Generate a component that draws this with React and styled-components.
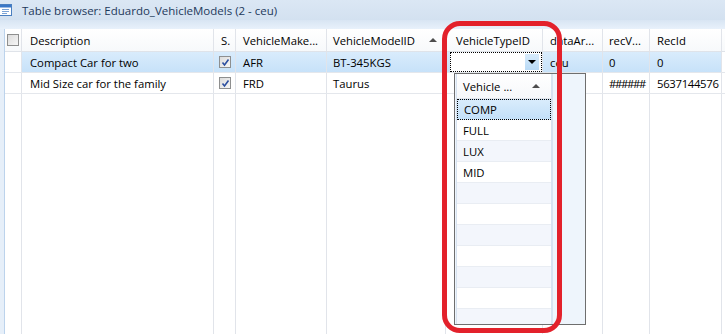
import React from "react";
import styled, { createGlobalStyle } from "styled-components";

const Global = createGlobalStyle`
  html, body { margin: 0; padding: 0; background: #e6eff9; }
  body { font-family: "Open Sans", "Liberation Sans", sans-serif; }
`;

const COLS = "17px 192px 22px 91px 119px 97px 60px 47px 72px 1fr";

const Window = styled.div`
  position: relative;
  width: 725px;
  height: 334px;
  overflow: hidden;
  background: #e6eff9;
  display: flex;
  flex-direction: column;
  font-size: 11.3px;
  color: #000;
`;

const TitleBar = styled.div`
  height: 20px;
  display: flex;
  align-items: center;
  gap: 10px;
  background: linear-gradient(#dbe7f4, #d3e1f0);
  color: #1e395b;
  font-size: 11.5px;
  flex: none;
`;

const TitleText = styled.span`
  letter-spacing: 0;
`;

const Band = styled.div`
  height: 9px;
  flex: none;
  background: linear-gradient(#d8e5f3, #e8f1fb);
`;

const Body = styled.div`
  flex: 1;
  display: flex;
  min-height: 0;
`;

const Edge = styled.div`
  width: 4px;
  flex: none;
  background: #e6eff9;
  border-right: 1px solid #bcd3ec;
`;

const Grid = styled.div`
  flex: 1;
  display: flex;
  flex-direction: column;
  background: #fff;
`;

const Row = styled.div`
  display: grid;
  grid-template-columns: ${COLS};
  height: ${(p) => p.$h}px;
  flex: ${(p) => (p.$fill ? 1 : "none")};
  box-sizing: border-box;
  border-bottom: ${(p) => (p.$fill ? "none" : `1px solid ${p.$line || "#e4e7ec"}`)};
  background: ${(p) => (p.$head ? "linear-gradient(#ffffff, #f7f9fb)" : "#fff")};
`;

const Cell = styled.div`
  display: flex;
  align-items: center;
  padding-left: ${(p) => p.$pl ?? 7}px;
  border-right: ${(p) => (p.$last ? "none" : "1px solid #e1e4ea")};
  white-space: nowrap;
  overflow: hidden;
  position: relative;
  letter-spacing: ${(p) => p.$ls ?? 0}px;
  background: ${(p) =>
    p.$sel ? "linear-gradient(#d9ecfc, #c7e2f9)" : "transparent"};
  color: #000;
`;

const HeadCell = styled(Cell)`
  justify-content: space-between;
  padding-right: 8px;
`;

const SortUp = styled.span`
  width: 0;
  height: 0;
  border-left: 4px solid transparent;
  border-right: 4px solid transparent;
  border-bottom: 4px solid #4d4d4d;
`;

const Box = styled.span`
  width: 12px;
  height: 12px;
  box-sizing: border-box;
  border: 1px solid #8e8f8f;
  background: linear-gradient(135deg, #dcdcdc, #f6f6f6);
  display: inline-flex;
  align-items: center;
  justify-content: center;
`;

const Editor = styled.div`
  position: absolute;
  left: 4px;
  top: 0;
  right: 0;
  bottom: 0;
  background: #fff;
  border: 1px dotted #000;
  box-sizing: border-box;
  display: flex;
  justify-content: flex-end;
  align-items: stretch;
`;

const DropBtn = styled.div`
  width: 14px;
  margin: 1px 2px 1px 0;
  background: linear-gradient(#d7ebfb, #b9daf6);
  display: flex;
  align-items: center;
  justify-content: center;
`;

const DownTri = styled.span`
  width: 0;
  height: 0;
  border-left: 4px solid transparent;
  border-right: 4px solid transparent;
  border-top: 4px solid #000;
`;

const Popup = styled.div`
  position: absolute;
  left: 454px;
  top: 73px;
  width: 132px;
  height: 252px;
  box-sizing: border-box;
  border: 1px solid #6e6e6e;
  background: #eef5fc;
  display: flex;
  z-index: 2;
`;

const List = styled.div`
  width: 94px;
  margin-left: 1px;
  border-left: 1px solid #d6e2f0;
  border-right: 2px solid #d7e3f1;
  background: #fff;
  display: flex;
  flex-direction: column;
  overflow: hidden;
`;

const ListHead = styled.div`
  height: 24px;
  flex: none;
  display: flex;
  align-items: center;
  justify-content: space-between;
  padding: 0 11px 0 6px;
  border-bottom: 1px solid #e2e6ec;
  background: linear-gradient(#ffffff, #f6f8fa);
`;

const Item = styled.div`
  height: 21px;
  flex: none;
  box-sizing: border-box;
  display: flex;
  align-items: center;
  padding-left: 6px;
  border: ${(p) => (p.$sel ? "1px dotted #000" : "none")};
  border-bottom: ${(p) => (p.$sel ? "1px dotted #000" : "1px solid #e9edf3")};
  background: ${(p) =>
    p.$sel
      ? "linear-gradient(#d9ecfc, #c3e0f8)"
      : p.$alt
      ? "#f3f6fc"
      : "#fff"};
`;

const Ring = styled.div`
  position: absolute;
  left: 442px;
  top: 21px;
  width: 120px;
  height: 312px;
  box-sizing: border-box;
  border: 5px solid #e3212b;
  border-radius: 18px;
  z-index: 3;
  pointer-events: none;
`;

const Check = ({ on }) => (
  <Box>
    {on && (
      <svg width="9" height="9" viewBox="0 0 9 9">
        <path d="M1.5 4.5 L3.5 7 L7.5 1.5" fill="none" stroke="#2c4fa0" strokeWidth="1.6" />
      </svg>
    )}
  </Box>
);

const WinIcon = () => (
  <svg width="13" height="12" viewBox="0 0 13 12" style={{ marginLeft: -1 }}>
    <rect x="0.5" y="0.5" width="12" height="11" fill="#fff" stroke="#4a7fc0" />
    <rect x="1" y="1" width="11" height="2.5" fill="#3a78c8" />
    <rect x="3" y="5" width="7" height="1" fill="#7aa3d6" />
    <rect x="3" y="7" width="7" height="1" fill="#7aa3d6" />
    <rect x="3" y="9" width="5" height="1" fill="#7aa3d6" />
  </svg>
);

const headers = [
  { t: "Description", pl: 8 },
  { t: "S.", pl: 7 },
  { t: "VehicleMake...", pl: 7 },
  { t: "VehicleModelID", pl: 6, sort: true },
  { t: "VehicleTypeID", pl: 10 },
  { t: "dataAr...", pl: 7 },
  { t: "recV...", pl: 6 },
  { t: "RecId", pl: 7 },
];

const rows = [
  { d: "Compact Car for two", s: true, mk: "AFR", md: "BT-345KGS", da: "ceu", rv: "0", id: "0", sel: true },
  { d: "Mid Size car for the family", s: true, mk: "FRD", md: "Taurus", da: "", rv: "######", id: "5637144576" },
];

const items = ["COMP", "FULL", "LUX", "MID", "", "", "", "", "", "", "", ""];

export default function App() {
  return (
    <Window>
      <Global />
      <TitleBar>
        <WinIcon />
        <TitleText>Table browser: Eduardo_VehicleModels (2 - ceu)</TitleText>
      </TitleBar>
      <Band />
      <Body>
        <Edge />
        <Grid>
          <Row $h={23} $head $line="#dfe3e9">
            <Cell $pl={2}>
              <Box />
            </Cell>
            {headers.map((h) => (
              <HeadCell key={h.t} $pl={h.pl}>
                <span>{h.t}</span>
                {h.sort && <SortUp />}
              </HeadCell>
            ))}
            <Cell $last />
          </Row>
          {rows.map((r, i) => (
            <Row key={i} $h={21}>
              <Cell />
              <Cell $sel={r.sel} $pl={8}>{r.d}</Cell>
              <Cell $sel={r.sel} $pl={5}>
                <Check on={r.s} />
              </Cell>
              <Cell $sel={r.sel}>{r.mk}</Cell>
              <Cell $sel={r.sel} $pl={6}>{r.md}</Cell>
              <Cell $sel={r.sel}>
                {r.sel && (
                  <Editor>
                    <DropBtn>
                      <DownTri />
                    </DropBtn>
                  </Editor>
                )}
              </Cell>
              <Cell $sel={r.sel}>{r.da}</Cell>
              <Cell $sel={r.sel} $pl={6} $ls={r.rv.length > 1 ? -1.3 : 0}>{r.rv}</Cell>
              <Cell $sel={r.sel} $ls={-0.3}>{r.id}</Cell>
              <Cell $last />
            </Row>
          ))}
          <Row $fill>
            {Array.from({ length: 10 }).map((_, i) => (
              <Cell key={i} $last={i === 9} />
            ))}
          </Row>
        </Grid>
      </Body>
      <Popup>
        <List>
          <ListHead>
            <span>Vehicle ...</span>
            <SortUp />
          </ListHead>
          {items.map((t, i) => (
            <Item key={i} $sel={i === 0} $alt={i % 2 === 0}>
              {t}
            </Item>
          ))}
        </List>
      </Popup>
      <Ring />
    </Window>
  );
}
